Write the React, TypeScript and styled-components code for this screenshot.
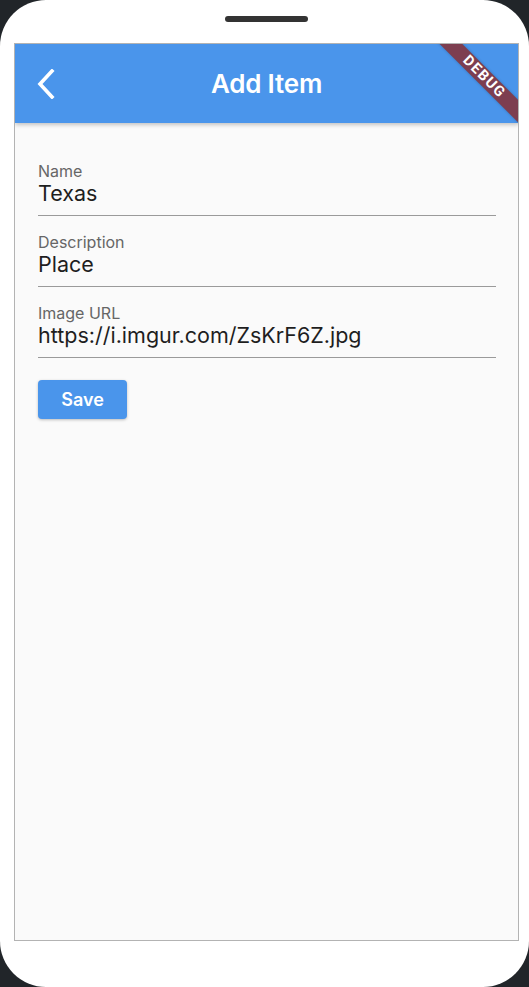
import styled, { createGlobalStyle } from 'styled-components';

const GlobalStyle = createGlobalStyle`
  html, body {
    margin: 0;
    padding: 0;
    background: #212529;
  }
  body {
    font-family: Inter, Roboto, "Liberation Sans", Arial, sans-serif;
  }
`;

const Phone = styled.div`
  width: 529px;
  height: 987px;
  background: #ffffff;
  border-radius: 46px;
  display: flex;
  flex-direction: column;
  align-items: flex-start;
  box-sizing: border-box;
  padding-top: 16px;
  overflow: hidden;
`;

const Notch = styled.div`
  align-self: center;
  width: 83px;
  height: 6px;
  border-radius: 3px;
  background: #333333;
  margin-left: 4px;
`;

const Screen = styled.div`
  position: relative;
  margin: 21px 0 0 14px;
  width: 505px;
  height: 898px;
  box-sizing: border-box;
  border: 1px solid #b3b3b3;
  background: #fafafa;
  overflow: hidden;
  display: flex;
  flex-direction: column;
`;

const AppBar = styled.header`
  height: 79px;
  flex-shrink: 0;
  background: #4a95eb;
  display: flex;
  align-items: center;
  position: relative;
  box-shadow: 0 2px 4px rgba(0, 0, 0, 0.22);
  z-index: 1;
`;

const BackButton = styled.button`
  background: none;
  border: none;
  padding: 0;
  margin-left: 20px;
  width: 22px;
  height: 32px;
  display: flex;
  align-items: center;
  justify-content: center;
  cursor: pointer;
`;

const Title = styled.h1`
  position: absolute;
  left: 0;
  right: 0;
  margin: 0;
  text-align: center;
  color: #ffffff;
  font-size: 26px;
  font-weight: 600;
  letter-spacing: -0.2px;
  pointer-events: none;
`;

const Ribbon = styled.div`
  position: absolute;
  top: 25px;
  right: -26px;
  width: 120px;
  height: 16px;
  background: #7d3e50;
  transform: rotate(45deg);
  display: flex;
  align-items: center;
  justify-content: center;
  color: #ffffff;
  font-family: Roboto, "Liberation Sans", Arial, sans-serif;
  font-size: 14.5px;
  font-weight: 700;
  letter-spacing: 1.4px;
  line-height: 1;
  z-index: 2;
  box-shadow: 0 0 3px rgba(0, 0, 0, 0.25);
`;

const Form = styled.form`
  display: flex;
  flex-direction: column;
  padding: 39px 22px 0 23px;
  gap: 17px;
`;

const Field = styled.label`
  display: flex;
  flex-direction: column;
  padding-bottom: 9px;
  border-bottom: 1.3px solid #9a9a9a;
`;

const FieldLabel = styled.span`
  font-size: 16px;
  line-height: 18px;
  color: #666666;
`;

const FieldValue = styled.input`
  font-family: inherit;
  font-size: 21.5px;
  line-height: 26px;
  height: 26px;
  color: #1e1e1e;
  background: transparent;
  border: none;
  outline: none;
  padding: 0;
  margin: 0;
`;

const SaveButton = styled.button`
  align-self: flex-start;
  margin-top: 5px;
  width: 89px;
  height: 39px;
  border: none;
  border-radius: 4px;
  background: #4a95eb;
  color: #ffffff;
  font-family: inherit;
  font-size: 18px;
  font-weight: 600;
  box-shadow: 0 1px 3px rgba(0, 0, 0, 0.25);
  cursor: pointer;
`;

const BackIcon = () => (
  <svg width="18" height="30" viewBox="0 0 18 30">
    <polyline
      points="15,2 3,15 15,28"
      fill="none"
      stroke="#ffffff"
      strokeWidth="3.6"
      strokeLinecap="square"
      strokeLinejoin="miter"
    />
  </svg>
);

const fields = [
  { label: 'Name', value: 'Texas' },
  { label: 'Description', value: 'Place' },
  { label: 'Image URL', value: 'https://i.imgur.com/ZsKrF6Z.jpg' },
];

export default function App() {
  return (
    <>
      <GlobalStyle />
      <Phone>
        <Notch />
        <Screen>
          <AppBar>
            <BackButton type="button" aria-label="Back">
              <BackIcon />
            </BackButton>
            <Title>Add Item</Title>
          </AppBar>
          <Ribbon>DEBUG</Ribbon>
          <Form onSubmit={(e) => e.preventDefault()}>
            {fields.map((f) => (
              <Field key={f.label}>
                <FieldLabel>{f.label}</FieldLabel>
                <FieldValue defaultValue={f.value} />
              </Field>
            ))}
            <SaveButton type="submit">Save</SaveButton>
          </Form>
        </Screen>
      </Phone>
    </>
  );
}
